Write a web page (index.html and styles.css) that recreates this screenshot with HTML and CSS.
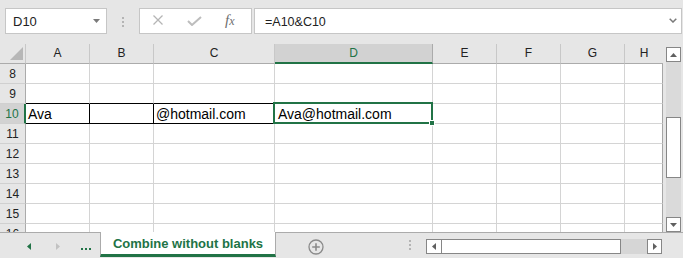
FILE: index.html
```html
<!DOCTYPE html>
<html>
<head>
<meta charset="utf-8">
<link rel="stylesheet" href="styles.css">
</head>
<body>
<div class="app">
  <div class="toolbar">
    <div class="namebox">
      <span class="nb-text">D10</span>
      <svg class="nb-caret" width="7" height="4" viewBox="0 0 7 4"><path d="M0 0h7L3.5 4z" fill="#7a7a7a"/></svg>
    </div>
    <div class="vdots"><i></i><i></i><i></i></div>
    <div class="fxgroup">
      <svg class="ic-x" width="12" height="12" viewBox="0 0 12 12"><path d="M1.5 1.5l9 9M10.5 1.5l-9 9" stroke="#b5b5b5" stroke-width="1.3" fill="none"/></svg>
      <svg class="ic-check" width="15" height="10" viewBox="0 0 15 10"><path d="M1 5l4 4 9-8" stroke="#bdbdbd" stroke-width="2" fill="none"/></svg>
      <span class="fx"><span class="fx-f">f</span><span class="fx-x">x</span></span>
    </div>
    <div class="formula">
      <span class="fm-text">=A10&amp;C10</span>
      <svg class="fm-chev" width="8" height="5" viewBox="0 0 8 5"><path d="M0.7 0.7l3.3 3.3 3.3-3.3" stroke="#7a7a7a" stroke-width="1.5" fill="none"/></svg>
    </div>
  </div>

  <div class="sheet">
    <div class="grid">
      <div class="corner"><svg width="13" height="13" viewBox="0 0 13 13"><path d="M13 0v13H0z" fill="#b7b7b7"/></svg></div>
      <div class="ch">A</div><div class="ch">B</div><div class="ch">C</div><div class="ch sel">D</div><div class="ch">E</div><div class="ch">F</div><div class="ch">G</div><div class="ch last">H</div>

      <div class="rh">8</div><div class="c"></div><div class="c"></div><div class="c"></div><div class="c"></div><div class="c"></div><div class="c"></div><div class="c"></div><div class="c last"></div>
      <div class="rh">9</div><div class="c bb"></div><div class="c bb"></div><div class="c bb"></div><div class="c"></div><div class="c"></div><div class="c"></div><div class="c"></div><div class="c last"></div>
      <div class="rh sel">10</div><div class="c bb br">Ava</div><div class="c bb br"></div><div class="c bb">@hotmail.com</div><div class="c active">Ava@hotmail.com<span class="selbox"></span><span class="handle"></span></div><div class="c"></div><div class="c"></div><div class="c"></div><div class="c last"></div>
      <div class="rh">11</div><div class="c"></div><div class="c"></div><div class="c"></div><div class="c"></div><div class="c"></div><div class="c"></div><div class="c"></div><div class="c last"></div>
      <div class="rh">12</div><div class="c"></div><div class="c"></div><div class="c"></div><div class="c"></div><div class="c"></div><div class="c"></div><div class="c"></div><div class="c last"></div>
      <div class="rh">13</div><div class="c"></div><div class="c"></div><div class="c"></div><div class="c"></div><div class="c"></div><div class="c"></div><div class="c"></div><div class="c last"></div>
      <div class="rh">14</div><div class="c"></div><div class="c"></div><div class="c"></div><div class="c"></div><div class="c"></div><div class="c"></div><div class="c"></div><div class="c last"></div>
      <div class="rh">15</div><div class="c"></div><div class="c"></div><div class="c"></div><div class="c"></div><div class="c"></div><div class="c"></div><div class="c"></div><div class="c last"></div>
      <div class="rh">16</div><div class="c"></div><div class="c"></div><div class="c"></div><div class="c"></div><div class="c"></div><div class="c"></div><div class="c"></div><div class="c last"></div>
    </div>
    <div class="vscroll">
      <div class="sbtn vbtn"><svg width="7" height="4" viewBox="0 0 7 4"><path d="M0 4h7L3.5 0z" fill="#606060"/></svg></div>
      <div class="vtrack"><div class="vthumb"></div></div>
      <div class="sbtn vbtn"><svg width="7" height="4" viewBox="0 0 7 4"><path d="M0 0h7L3.5 4z" fill="#606060"/></svg></div>
    </div>
  </div>

  <div class="tabbar">
    <div class="tabnav">
      <svg class="nav-prev" width="4" height="7" viewBox="0 0 4 7"><path d="M4 0v7L0 3.5z" fill="#217346"/></svg>
      <svg class="nav-next" width="4" height="7" viewBox="0 0 4 7"><path d="M0 0v7L4 3.5z" fill="#c2c2c2"/></svg>
      <div class="more"><i></i><i></i><i></i></div>
    </div>
    <div class="tab">Combine without blanks</div>
    <svg class="addsheet" width="16" height="16" viewBox="0 0 16 16"><circle cx="8" cy="8" r="7" fill="none" stroke="#8a8a8a" stroke-width="1.3"/><path d="M8 4.2v7.6M4.2 8h7.6" stroke="#8a8a8a" stroke-width="1.6"/></svg>
    <div class="hdots"><i></i><i></i><i></i></div>
    <div class="hscroll">
      <div class="sbtn hbtn"><svg width="4" height="7" viewBox="0 0 4 7"><path d="M4 0v7L0 3.5z" fill="#606060"/></svg></div>
      <div class="hthumb"></div>
      <div class="htrack"></div>
      <div class="sbtn hbtn right"><svg width="4" height="7" viewBox="0 0 4 7"><path d="M0 0v7L4 3.5z" fill="#606060"/></svg></div>
    </div>
  </div>
</div>
</body>
</html>
```

FILE: styles.css
```css
* { box-sizing: border-box; }
html, body { margin: 0; padding: 0; }
body {
  width: 683px;
  height: 258px;
  overflow: hidden;
  background: #e6e6e6;
  font-family: "Liberation Sans", Arial, sans-serif;
}
.app { width: 683px; height: 258px; display: flex; flex-direction: column; }

/* toolbar */
.toolbar {
  height: 44px;
  display: flex;
  align-items: flex-start;
  padding: 8px 0 0 5px;
  flex: none;
}
.namebox {
  width: 102px;
  height: 26px;
  background: #fff;
  border: 1px solid #c6c6c6;
  display: flex;
  align-items: center;
  padding: 0 0 0 7px;
  font-size: 13px;
  color: #222;
}
.nb-text { flex: 1; padding-top: 1px; }
.nb-caret { margin-right: 6px; margin-top: 0px; }
.vdots {
  width: 3px;
  margin: 9px 0 0 15px;
  display: flex;
  flex-direction: column;
  gap: 2px;
}
.vdots i, .hdots i { display: block; width: 2px; height: 2px; background: #b4b4b4; }
.fxgroup {
  margin-left: 14px;
  width: 113px;
  height: 26px;
  background: #fff;
  border: 1px solid #c6c6c6;
  display: flex;
  align-items: center;
  padding-left: 12px;
}
.ic-x { margin-top: -2px; }
.ic-check { margin-left: 23px; margin-top: 0px; }
.fx {
  margin-left: 23px;
  font-family: "Liberation Serif", "Times New Roman", serif;
  font-style: italic;
  color: #6e6e6e;
  margin-top: -2px;
}
.fx-f { font-size: 15px; }
.fx-x { font-size: 12px; }
.formula {
  margin-left: 2px;
  width: 428px;
  height: 26px;
  background: #fff;
  border: 1px solid #c6c6c6;
  display: flex;
  align-items: center;
  padding-left: 10px;
  font-size: 12.5px;
  color: #222;
}
.fm-text { flex: 1; padding-top: 1px; }
.fm-chev { margin-right: 4px; margin-top: -1px; }

/* sheet */
.sheet { height: 188px; display: flex; flex: none; overflow: hidden; }
.grid {
  width: 663px;
  display: grid;
  grid-template-columns: 26px 64px 64px 121px 158px 64px 64px 64px 38px;
  grid-template-rows: repeat(10, 20px);
  background: #fff;
  align-content: start;
}
.corner {
  background: #e6e6e6;
  border-right: 1px solid #c8c8c8;
  border-bottom: 1px solid #ababab;
  padding: 3px 0 0 10px;
}
.corner svg { display: block; }
.ch {
  background: #e6e6e6;
  border-right: 1px solid #c8c8c8;
  border-bottom: 1px solid #ababab;
  text-align: center;
  font-size: 12px;
  line-height: 19px;
  color: #222;
}
.ch.last { border-right: none; }
.ch.sel {
  background: #d2d2d2;
  color: #217346;
  border-bottom: 2px solid #217346;
  border-right-color: #ababab;
}
.rh {
  background: #e6e6e6;
  border-right: 1px solid #ababab;
  border-bottom: 1px solid #d0d0d0;
  text-align: center;
  font-size: 12px;
  line-height: 20px;
  color: #222;
}
.rh.sel {
  background: #d2d2d2;
  color: #217346;
  border-right: 2px solid #217346;
}
.c {
  border-right: 1px solid #d4d4d4;
  border-bottom: 1px solid #d4d4d4;
  font-size: 14px;
  line-height: 20px;
  padding-left: 2px;
  color: #000;
  white-space: nowrap;
  overflow: visible;
}
.c.last { border-right-color: #a6a6a6; }
.c.bb { border-bottom-color: #000; }
.c.br { border-right-color: #000; }
.c.active { position: relative; padding-left: 3px; }
.selbox {
  position: absolute;
  left: -2px;
  top: -2px;
  right: -1px;
  bottom: -1px;
  border: 2px solid #217346;
}
.handle {
  position: absolute;
  width: 6px;
  height: 6px;
  right: -3px;
  bottom: -3px;
  background: #217346;
  border: 1px solid #fff;
}

/* scrollbars */
.vscroll {
  width: 20px;
  padding: 3px 2px 0 3px;
  display: flex;
  flex-direction: column;
  background: #e6e6e6;
}
.sbtn {
  background: #fff;
  border: 1px solid #868686;
  display: flex;
  align-items: center;
  justify-content: center;
  flex: none;
}
.sbtn svg { display: block; }
.vbtn { height: 15px; }
.vtrack { flex: 1; background: #dadada; }
.vthumb {
  margin-top: 55px;
  height: 61px;
  background: #fff;
  border: 1px solid #868686;
}

/* tab bar */
.tabbar {
  height: 26px;
  flex: none;
  border-top: 1px solid #ababab;
  display: flex;
  align-items: flex-start;
  position: relative;
}
.tabnav { width: 100px; display: flex; align-items: flex-start; flex: none; }
.nav-prev { margin: 10px 0 0 27px; display: block; }
.nav-next { margin: 10px 0 0 25px; display: block; }
.more { display: flex; gap: 2px; margin: 15px 0 0 21px; }
.more i { display: block; width: 2px; height: 2px; background: #217346; }
.tab {
  width: 176px;
  height: 25px;
  margin-top: -1px;
  background: #fff;
  border-left: 1px solid #ababab;
  border-right: 1px solid #ababab;
  border-bottom: 3px solid #217346;
  text-align: center;
  font-weight: bold;
  font-size: 13px;
  line-height: 22px;
  padding-top: 1px;
  color: #217346;
  flex: none;
}
.addsheet { margin: 6px 0 0 32px; display: block; flex: none; }
.hdots { display: flex; flex-direction: column; gap: 2px; margin: 7px 0 0 85px; }
.hscroll { display: flex; margin: 6px 0 0 15px; height: 15px; width: 236px; }
.hbtn { width: 16px; height: 15px; }
.hbtn.right { width: 15px; }
.hthumb {
  width: 180px;
  margin-left: -1px;
  background: #fff;
  border: 1px solid #868686;
}
.htrack { flex: 1; background: #d6d6d6; }
```
